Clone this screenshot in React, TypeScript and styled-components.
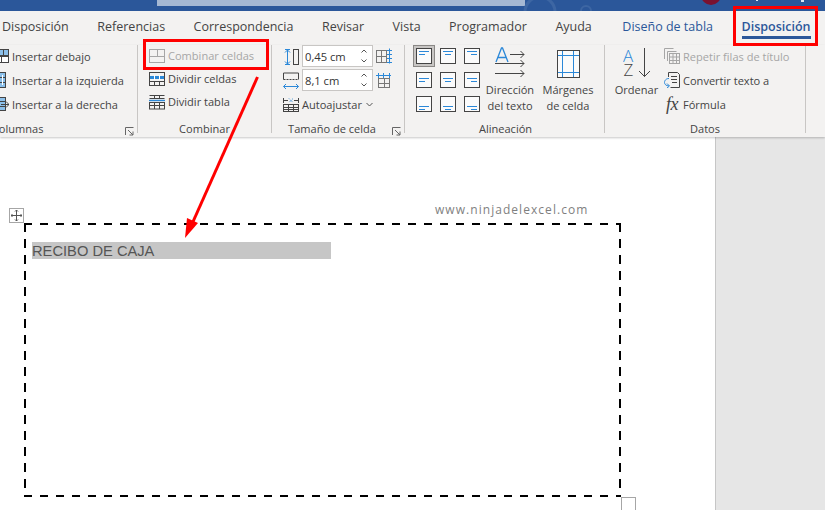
import React from "react";
import styled, { createGlobalStyle } from "styled-components";

const GlobalStyle = createGlobalStyle`
    html, body {
        margin: 0;
        padding: 0;
        background: #fff;
    }
    * {
        box-sizing: border-box;
    }
`;

const Window = styled.div`
    position: relative;
    width: 825px;
    height: 510px;
    overflow: hidden;
    display: flex;
    flex-direction: column;
    font-family: "Open Sans", "Noto Sans", sans-serif;
    font-size: 11.05px;
    color: #444;
`;

const TitleBar = styled.div`
    position: relative;
    height: 11px;
    flex: none;
    background: #2b579a;
    display: flex;
    overflow: hidden;
    padding-left: 157px;
`;

const TitleRings = styled.svg`
    position: absolute;
    left: 520px;
    top: 0;
    width: 80px;
    height: 11px;
`;

const SearchBox = styled.div`
    width: 368px;
    height: 6px;
    background: #a5b8d3;
`;

const Avatar = styled.div`
    width: 20px;
    height: 20px;
    margin: -15px 0 0 176px;
    border-radius: 50%;
    background: #7a1230;
`;

const TitleGlyph = styled.div<{ $gap: number; $size: number }>`
    width: ${({ $size }) => $size}px;
    height: ${({ $size }) => $size - 1}px;
    margin-left: ${({ $gap }) => $gap}px;
    background: #dfe6f1;
`;

const TabBar = styled.div`
    height: 34px;
    flex: none;
    background: #f3f2f1;
    display: flex;
    align-items: center;
    gap: 28.5px;
    padding: 0 0 2px 2px;
`;

const Tab = styled.div<{ $contextual?: boolean; $active?: boolean; $groupStart?: boolean }>`
    position: relative;
    font-size: 12.5px;
    line-height: 18px;
    white-space: nowrap;
    margin-left: ${({ $groupStart }) => ($groupStart ? 2 : 0)}px;
    font-weight: ${({ $active }) => ($active ? 600 : 400)};
    color: ${({ $contextual }) => ($contextual ? "#2b579a" : "#444")};

    ${({ $active }) =>
        $active &&
        `
        &::after {
            content: "";
            position: absolute;
            left: 0;
            right: 0;
            bottom: -3px;
            height: 3px;
            background: #2b579a;
        }
    `}
`;

const Ribbon = styled.div`
    height: 92px;
    flex: none;
    background: #f3f2f1;
    display: flex;
    align-items: flex-start;
    box-shadow: 0 1px 2px rgba(0, 0, 0, 0.22);
    z-index: 1;
`;

const Group = styled.div<{ $width: number }>`
    position: relative;
    width: ${({ $width }) => $width}px;
    height: 88px;
    flex: none;
    display: flex;
    flex-direction: column;
    border-right: 1px solid #c8c6c4;
`;

const GroupBody = styled.div`
    height: 76px;
    display: flex;
`;

const GroupLabel = styled.div<{ $offset?: number }>`
    height: 16px;
    margin-bottom: -4px;
    line-height: 16px;
    text-align: center;
    white-space: nowrap;
    transform: translateX(${({ $offset }) => $offset ?? 0}px);
`;

const Launcher = styled.svg`
    position: absolute;
    right: 3px;
    bottom: -3px;
    width: 9px;
    height: 9px;
`;

const RowList = styled.div<{ $left: number; $row: number }>`
    margin: -1px 0 0 ${({ $left }) => $left}px;
    display: flex;
    flex-direction: column;

    & > * {
        height: ${({ $row }) => $row}px;
    }
`;

const Command = styled.div<{ $disabled?: boolean }>`
    display: flex;
    align-items: center;
    gap: 3px;
    white-space: nowrap;
    color: ${({ $disabled }) => ($disabled ? "#a6a6a6" : "#444")};
`;

const SizeGrid = styled.div`
    margin-left: 11px;
    display: grid;
    grid-template-columns: 16px 71px 16px;
    grid-auto-rows: 22px;
    column-gap: 3px;
    row-gap: 2px;
    align-items: center;
`;

const Spinner = styled.div`
    height: 22px;
    display: flex;
    align-items: center;
    justify-content: space-between;
    padding: 0 4px 0 2px;
    background: #fff;
    border: 1px solid #c8c6c4;
    font-size: 11.2px;
    color: #333;
`;

const SpinArrows = styled.svg`
    width: 8px;
    height: 16px;
`;

const AutoFit = styled.div`
    grid-column: 2 / 4;
    display: flex;
    align-items: center;
    gap: 4px;
`;

const AlignGrid = styled.div`
    margin-left: 8px;
    display: grid;
    grid-template-columns: repeat(3, 22px);
    grid-auto-rows: 22px;
    gap: 2px;
`;

const AlignButton = styled.div<{ $selected?: boolean }>`
    display: flex;
    align-items: center;
    justify-content: center;
    background: ${({ $selected }) => ($selected ? "#c8c6c4" : "transparent")};
    border: 1px solid ${({ $selected }) => ($selected ? "#8a8886" : "transparent")};
`;

const BigButton = styled.div<{ $width: number }>`
    width: ${({ $width }) => $width}px;
    display: flex;
    flex-direction: column;
    align-items: center;
    text-align: center;
    line-height: 16px;
`;

const BigIcon = styled.div`
    height: 37px;
    flex: none;
    display: flex;
    align-items: flex-end;
    padding-bottom: 4px;
`;

const DocumentArea = styled.div`
    flex: 1;
    display: flex;
    min-height: 0;
`;

const Page = styled.div`
    width: 716px;
    flex: none;
    background: #fff;
    border-right: 1px solid #c6c6c6;
    padding: 86px 0 0 24px;
`;

const Watermark = styled.div`
    height: 0;
    padding-left: 411px;
    transform: translateY(-22px);
    font-size: 12px;
    line-height: 18px;
    letter-spacing: 1.05px;
    color: #7f7f7f;
    white-space: nowrap;
`;

const Side = styled.div`
    flex: 1;
    background: #e6e6e6;
`;

const DashedTable = styled.div`
    position: relative;
    width: 597px;
    height: 274px;
    padding: 19px 0 0 8px;
    background-image:
        repeating-linear-gradient(to right, #000 0 8px, transparent 8px 16px),
        repeating-linear-gradient(to right, #000 0 8px, transparent 8px 16px),
        repeating-linear-gradient(to bottom, #000 0 9px, transparent 9px 16px),
        repeating-linear-gradient(to bottom, #000 0 9px, transparent 9px 16px);
    background-size:
        100% 2px,
        100% 2px,
        2px 100%,
        2px 100%;
    background-position:
        0 0,
        0 100%,
        0 0,
        100% 0;
    background-repeat: no-repeat;
`;

const CellHighlight = styled.div`
    width: 299px;
    height: 17px;
    padding-top: 1px;
    background: #c6c6c6;
    color: #555;
    font-family: "Liberation Sans", Arial, sans-serif;
    font-size: 14.7px;
    line-height: 17px;
    white-space: nowrap;
`;

const MoveHandle = styled.div`
    position: absolute;
    left: -15px;
    top: -15px;
    width: 15px;
    height: 15px;
    background: #fff;
    border: 1px solid #a6a6a6;
    display: flex;
    align-items: center;
    justify-content: center;
`;

const ResizeHandle = styled.div`
    position: absolute;
    right: -15px;
    bottom: -15px;
    width: 15px;
    height: 15px;
    background: #fff;
    border: 1px solid #a6a6a6;
`;

const Annotations = styled.svg`
    position: absolute;
    left: 0;
    top: 0;
    width: 825px;
    height: 510px;
    pointer-events: none;
    z-index: 2;
`;

const BLUE = "#2b88d8";
const DARK = "#444";
const MUTED = "#a6a6a6";
const RED = "#ff0000";

// small 16px ribbon glyphs
const Icon = ({ children, size = 16 }: { children: React.ReactNode; size?: number }) => (
    <svg width={size} height={size} viewBox={`0 0 ${size} ${size}`} fill="none" style={{ flex: "none" }}>
        {children}
    </svg>
);

const InsertBelowIcon = () => (
    <Icon>
        <rect x="0.5" y="1.5" width="15" height="6" fill="#8cc0ea" stroke={DARK} />
        <path d="M5.5 1.5v6M10.5 1.5v6" stroke={DARK} />
        <rect x="5.5" y="8.5" width="10" height="6" fill="#fff" stroke={DARK} />
        <path d="M8.5 9v5M5.5 11v3.5h-3M2.5 14.5l1.5-1.5M2.5 14.5l1.5 1.5" stroke={DARK} />
    </Icon>
);

const InsertLeftIcon = () => (
    <Icon>
        <rect x="0.5" y="0.5" width="6" height="15" fill="#fff" stroke={DARK} />
        <rect x="6.5" y="0.5" width="6" height="15" fill="#8cc0ea" stroke={DARK} />
        <path d="M0.5 5.5h12M0.5 10.5h12" stroke={DARK} />
        <path d="M9.5 3v10" stroke="#fff" />
    </Icon>
);

const InsertRightIcon = () => (
    <Icon>
        <rect x="0.5" y="1.5" width="12" height="13" fill="#8cc0ea" stroke={DARK} />
        <path d="M0.5 5.5h12M0.5 10.5h12" stroke={DARK} />
        <path d="M8 8.5h8M13 5.5l3 3-3 3" stroke={DARK} />
    </Icon>
);

const MergeIcon = () => (
    <Icon>
        <rect x="0.5" y="1.5" width="15" height="13" stroke={MUTED} />
        <path d="M0.5 8.5h15M8.5 1.5v7" stroke={MUTED} />
    </Icon>
);

const SplitCellsIcon = () => (
    <Icon>
        <rect x="0.5" y="1.5" width="15" height="13" stroke={DARK} />
        <path d="M0.5 10.5h15M5.5 10.5v4M10.5 10.5v4" stroke={DARK} />
        <rect x="1" y="5" width="14" height="3" fill={BLUE} />
        <path d="M5.5 4v5M10.5 4v5" stroke="#fff" />
    </Icon>
);

const SplitTableIcon = () => (
    <Icon>
        <path d="M0.5 1.5h15M0.5 4.5h15" stroke={DARK} />
        <path d="M0 6.5h16" stroke={BLUE} strokeWidth="1.4" />
        <path d="M5.5 1.5v3M10.5 1.5v3" stroke={DARK} />
        <rect x="0.5" y="8.5" width="15" height="6.5" stroke={DARK} />
        <path d="M0.5 11.5h15M5.5 8.5v6.5M10.5 8.5v6.5" stroke={DARK} />
    </Icon>
);

const RowHeightIcon = () => (
    <Icon size={17}>
        <rect x="10.5" y="1.5" width="5" height="15" stroke={DARK} />
        <path d="M4.5 2v14M2 4.5 4.5 2 7 4.5M2 13.5 4.5 16 7 13.5" stroke={BLUE} />
        <path d="M2 1.5h5M2 16.5h5" stroke={BLUE} />
    </Icon>
);

const ColumnWidthIcon = () => (
    <Icon size={17}>
        <path d="M0.5 7.5v-6.5h15v6.5" stroke={DARK} />
        <path d="M0.5 7.5h15" stroke={DARK} strokeDasharray="2 1" />
        <path d="M0.5 14.5h15M3 12l-2.5 2.5L3 17M13 12l2.5 2.5L13 17" stroke={BLUE} />
    </Icon>
);

const DistributeColumnsIcon = () => (
    <Icon>
        <rect x="0.5" y="2.5" width="10" height="12" stroke="#777" />
        <path d="M5.5 2.5v12M0.5 8.5h10" stroke="#777" />
        <path d="M13.5 0.5v15M11 2.5h5M11 6.5h5M11 10.5h5M11 14.5h5" stroke={BLUE} />
    </Icon>
);

const DistributeRowsIcon = () => (
    <Icon>
        <path d="M0 3.5h15M2.5 1v5M7.5 1v5M13.5 1v5" stroke={BLUE} />
        <rect x="2.5" y="6.5" width="11" height="9" stroke="#777" />
        <path d="M2.5 11.5h11M8.5 6.5v9" stroke="#777" />
    </Icon>
);

const AutoFitIcon = () => (
    <Icon>
        <path d="M0.5 2v5M15.5 2v5M0.5 4.5H5M11 4.5h4.5" stroke={DARK} />
        <path d="M6 2.5l4 4M10 2.5l-4 4" stroke={BLUE} strokeDasharray="1 1" />
        <rect x="0.5" y="8.5" width="15" height="7" stroke={DARK} />
        <path d="M0.5 11.5h15M0.5 13.5h15M5.5 8.5v7M10.5 8.5v7" stroke={DARK} />
    </Icon>
);

const AlignIcon = ({ h, v }: { h: number; v: number }) => {
    const top = [3.5, 6.5, 10.5][v];
    const short = h === 0 ? "M3 3h6" : h === 1 ? "M5 3h6" : "M7 3h6";
    return (
        <Icon>
            <rect x="0.5" y="0.5" width="15" height="15" fill="#fbfbfb" stroke={DARK} />
            <g transform={`translate(0 ${top})`} stroke={BLUE}>
                <path d="M3 0h10" />
                <path d={short} />
            </g>
        </Icon>
    );
};

const TextDirectionIcon = () => (
    <svg width="30" height="31" viewBox="0 0 30 31" fill="none">
        <path d="M1 15 6.5 1h1L13 15M3 10.5h8" stroke={BLUE} strokeWidth="1.3" />
        <path d="M15 7.5h14M25.5 4 29 7.5 25.5 11" stroke={DARK} />
        <path d="M0 16.5h29M25.5 13 29 16.5 25.5 20" stroke={DARK} />
        <path d="M0 26.5h29M25.5 23 29 26.5 25.5 30" stroke={DARK} />
    </svg>
);

const CellMarginsIcon = () => (
    <svg width="23" height="28" viewBox="0 0 23 28" fill="none">
        <rect x="0.5" y="0.5" width="22" height="27" fill="#fbfbfb" stroke={DARK} />
        <path d="M5.5 1v26M16.5 1v26M1 5.5h21M1 22.5h21" stroke={BLUE} />
    </svg>
);

const SortIcon = () => (
    <svg width="28" height="30" viewBox="0 0 28 30" fill="none">
        <text x="0" y="14" fontFamily="Open Sans, sans-serif" fontSize="17" fontWeight="300" fill={BLUE}>
            A
        </text>
        <text x="0.5" y="28" fontFamily="Open Sans, sans-serif" fontSize="17" fontWeight="300" fill={DARK}>
            Z
        </text>
        <path d="M21.5 0v28.5M16 23l5.5 5.5 5.5-5.5" stroke={DARK} />
    </svg>
);

const RepeatHeaderIcon = () => (
    <Icon>
        <path d="M0.5 11V0.5h9M3.5 13V3.500h9" stroke={MUTED} />
        <rect x="5.5" y="5.5" width="10" height="10" stroke={MUTED} />
        <path d="M5.5 9h10M5.5 12.5h10M9 5.5v10M12.5 5.5v10" stroke={MUTED} />
    </Icon>
);

const ConvertIcon = () => (
    <Icon>
        <path d="M4.5 5V0.5h9l2 2v13h-9" stroke={DARK} />
        <path d="M7 4.5h6M7 7.5h6M8 10.5h5" stroke={DARK} />
        <path d="M5 6.5C1.5 6.5.5 9 .5 10.5S2 14 5 14M3 11.5 5.5 14 3 16" stroke={BLUE} />
    </Icon>
);

const FormulaGlyph = styled.span`
    width: 16px;
    flex: none;
    font-family: "Liberation Serif", serif;
    font-style: italic;
    font-weight: 400;
    font-size: 18px;
    letter-spacing: -0.5px;
    text-align: center;
`;

const LauncherIcon = () => (
    <Launcher viewBox="0 0 9 9" fill="none">
        <path d="M0.5 8V0.5H8.5M4 0.5V1M0.5 4H1" stroke="#666" />
        <path d="M3 3l5 5M8 4.5V8H4.5" stroke="#666" />
    </Launcher>
);

const tabs = ["Disposición", "Referencias", "Correspondencia", "Revisar", "Vista", "Programador", "Ayuda"];

const App: React.FC = () => {
    const alignCells = [0, 1, 2].flatMap((v) => [0, 1, 2].map((h) => ({ h, v })));

    return (
        <Window>
            <GlobalStyle />
            <TitleBar>
                <TitleRings viewBox="0 0 80 11" fill="none">
                    <circle cx="20" cy="12" r="15" stroke="#3d66a3" strokeWidth="3" />
                    <circle cx="66" cy="11" r="5" stroke="#3d66a3" strokeWidth="2" />
                </TitleRings>
                <SearchBox />
                <Avatar />
                <TitleGlyph $gap={35} $size={2} />
                <TitleGlyph $gap={43} $size={3} />
            </TitleBar>
            <TabBar>
                {tabs.map((tab, index) => (
                    <Tab key={index}>{tab}</Tab>
                ))}
                <Tab $contextual $groupStart>
                    Diseño de tabla
                </Tab>
                <Tab $contextual $active>
                    Disposición
                </Tab>
            </TabBar>
            <Ribbon>
                <Group $width={138}>
                    <GroupBody>
                        <RowList $left={-7} $row={24}>
                            <Command>
                                <InsertBelowIcon />
                                Insertar debajo
                            </Command>
                            <Command>
                                <InsertLeftIcon />
                                Insertar a la izquierda
                            </Command>
                            <Command>
                                <InsertRightIcon />
                                Insertar a la derecha
                            </Command>
                        </RowList>
                    </GroupBody>
                    <GroupLabel $offset={-67}>Filas y columnas</GroupLabel>
                    <LauncherIcon />
                </Group>
                <Group $width={134}>
                    <GroupBody>
                        <RowList $left={11} $row={23}>
                            <Command $disabled>
                                <MergeIcon />
                                Combinar celdas
                            </Command>
                            <Command>
                                <SplitCellsIcon />
                                Dividir celdas
                            </Command>
                            <Command>
                                <SplitTableIcon />
                                Dividir tabla
                            </Command>
                        </RowList>
                    </GroupBody>
                    <GroupLabel>Combinar</GroupLabel>
                </Group>
                <Group $width={133}>
                    <GroupBody>
                        <SizeGrid>
                            <RowHeightIcon />
                            <Spinner>
                                0,45 cm
                                <SpinArrows viewBox="0 0 8 16" fill="none">
                                    <path d="M1.5 4.5 4 2l2.5 2.5M1.5 11.5 4 14l2.5-2.5" stroke="#555" />
                                </SpinArrows>
                            </Spinner>
                            <DistributeColumnsIcon />
                            <ColumnWidthIcon />
                            <Spinner>
                                8,1 cm
                                <SpinArrows viewBox="0 0 8 16" fill="none">
                                    <path d="M1.5 4.5 4 2l2.5 2.5M1.5 11.5 4 14l2.5-2.5" stroke="#555" />
                                </SpinArrows>
                            </Spinner>
                            <DistributeRowsIcon />
                            <AutoFitIcon />
                            <AutoFit>
                                Autoajustar
                                <svg width="7" height="5" viewBox="0 0 7 5" fill="none">
                                    <path d="M0.5 1l3 3 3-3" stroke="#555" />
                                </svg>
                            </AutoFit>
                        </SizeGrid>
                    </GroupBody>
                    <GroupLabel $offset={-6}>Tamaño de celda</GroupLabel>
                    <LauncherIcon />
                </Group>
                <Group $width={200}>
                    <GroupBody>
                        <AlignGrid>
                            {alignCells.map(({ h, v }, index) => (
                                <AlignButton key={index} $selected={index === 0}>
                                    <AlignIcon h={h} v={v} />
                                </AlignButton>
                            ))}
                        </AlignGrid>
                        <BigButton $width={54}>
                            <BigIcon>
                                <TextDirectionIcon />
                            </BigIcon>
                            Dirección
                            <br />
                            del texto
                        </BigButton>
                        <BigButton $width={62}>
                            <BigIcon>
                                <CellMarginsIcon />
                            </BigIcon>
                            Márgenes
                            <br />
                            de celda
                        </BigButton>
                    </GroupBody>
                    <GroupLabel $offset={1}>Alineación</GroupLabel>
                </Group>
                <Group $width={201}>
                    <GroupBody>
                        <BigButton $width={63}>
                            <BigIcon>
                                <SortIcon />
                            </BigIcon>
                            Ordenar
                        </BigButton>
                        <RowList $left={-4} $row={24}>
                            <Command $disabled>
                                <RepeatHeaderIcon />
                                Repetir filas de título
                            </Command>
                            <Command>
                                <ConvertIcon />
                                Convertir texto a
                            </Command>
                            <Command>
                                <FormulaGlyph>fx</FormulaGlyph>
                                Fórmula
                            </Command>
                        </RowList>
                    </GroupBody>
                    <GroupLabel>Datos</GroupLabel>
                </Group>
            </Ribbon>
            <DocumentArea>
                <Page>
                    <Watermark>www.ninjadelexcel.com</Watermark>
                    <DashedTable>
                        <MoveHandle>
                            <svg width="11" height="11" viewBox="0 0 11 11" fill="none">
                                <path d="M5.5 0v11M0 5.5h11M4 1.5 5.5 0 7 1.5M4 9.5 5.5 11 7 9.5M1.5 4 0 5.5 1.5 7M9.5 4 11 5.5 9.5 7" stroke="#555" />
                            </svg>
                        </MoveHandle>
                        <CellHighlight>RECIBO DE CAJA</CellHighlight>
                        <ResizeHandle />
                    </DashedTable>
                </Page>
                <Side />
            </DocumentArea>
            <Annotations viewBox="0 0 825 510" fill="none">
                <rect x="144.5" y="40.5" width="123" height="28" stroke={RED} strokeWidth="3" />
                <rect x="734.5" y="7.5" width="82" height="37" stroke={RED} strokeWidth="3" />
                <path d="M257.5 77 192 224" stroke={RED} strokeWidth="3" />
                <path d="M185 238 187 218 198 223Z" fill={RED} />
            </Annotations>
        </Window>
    );
};

export default App;
